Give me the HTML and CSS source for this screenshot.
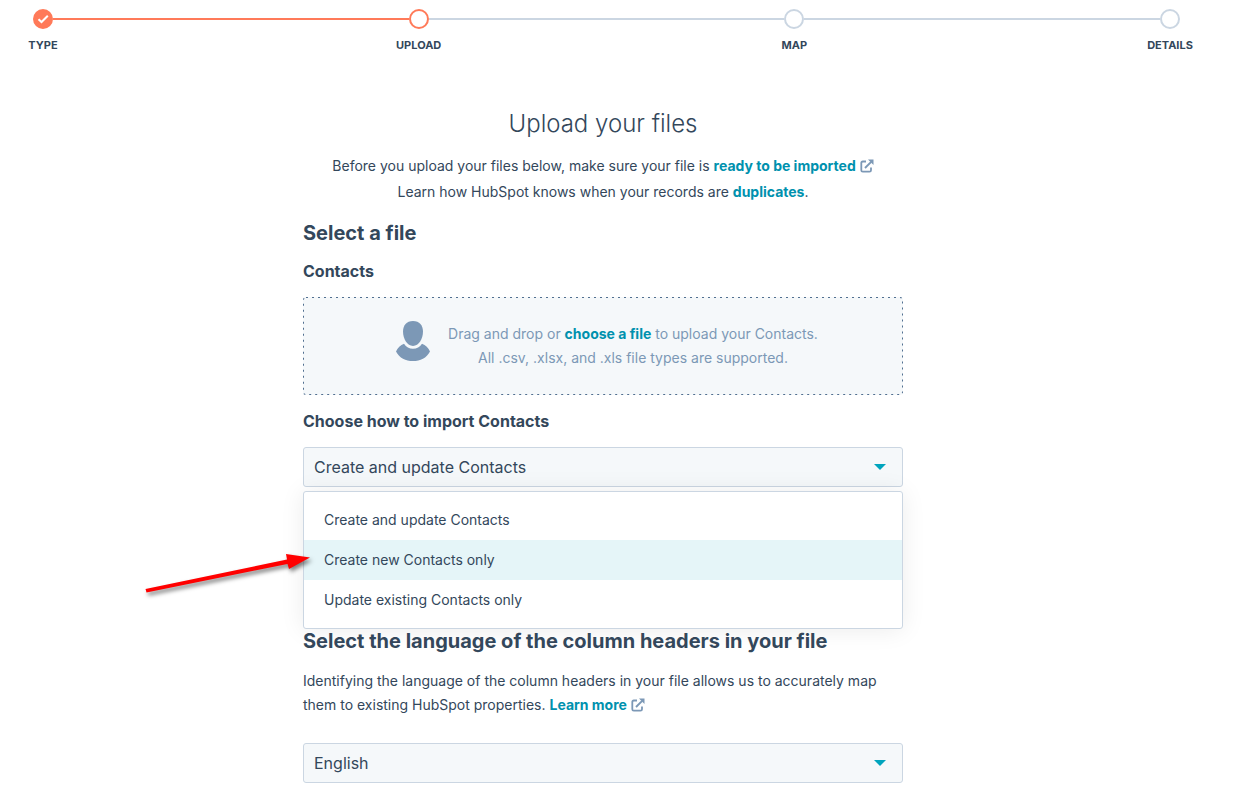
FILE: index.html
```html
<!DOCTYPE html>
<html lang="en">
<head>
<meta charset="utf-8">
<meta name="viewport" content="width=device-width, initial-scale=1">
<title>Upload your files</title>
<link rel="stylesheet" href="styles.css">
</head>
<body>
<svg class="defs" aria-hidden="true">
  <symbol id="external" viewBox="0 0 14 14">
    <path d="M6 2.500H2.800Q1.300 2.500 1.300 4V11.200Q1.300 12.700 2.800 12.700H9.500Q11 12.700 11 11.200V8.500" fill="none" stroke="currentColor" stroke-width="1.800"/>
    <path d="M5 9L11.200 2.800" fill="none" stroke="currentColor" stroke-width="1.900"/>
    <path d="M8 0.500H13.500V6Z" fill="currentColor"/>
  </symbol>
</svg>
<nav aria-label="Import progress">
  <ol class="stepper">
    <li class="step step-done">
      <span class="dot"><svg viewBox="0 0 20 20" aria-hidden="true"><path d="M5.500 10.200L8.500 13L14.800 6.700" fill="none" stroke="#fff" stroke-width="2"/></svg></span>
      <span class="step-label">TYPE</span>
    </li>
    <li class="line line-done" role="presentation"></li>
    <li class="step step-current" aria-current="step">
      <span class="dot"></span>
      <span class="step-label">UPLOAD</span>
    </li>
    <li class="line" role="presentation"></li>
    <li class="step"><span class="dot"></span><span class="step-label">MAP</span></li>
    <li class="line" role="presentation"></li>
    <li class="step"><span class="dot"></span><span class="step-label">DETAILS</span></li>
  </ol>
</nav>
<main class="content">
  <h1>Upload your files</h1>
  <p class="intro">Before you upload your files below, make sure your file is <a href="#">ready to be imported</a> <svg class="external"><use href="#external"/></svg><br>Learn how HubSpot knows when your records are <a href="#">duplicates</a>.</p>

  <h2>Select a file</h2>
  <h3>Contacts</h3>
  <div class="dropzone">
    <svg class="outline" aria-hidden="true"><rect width="100%" height="100%" rx="3"/></svg>
    <svg class="person" viewBox="0 0 34 40" aria-hidden="true">
      <path d="M17 0C23.500 0 27 4.600 27 10.600C27 18 22.800 25 17 25C11.200 25 7 18 7 10.600C7 4.600 10.500 0 17 0Z"/>
      <path d="M8 22.800C10.200 26 13.200 27.800 17 27.800C20.800 27.800 23.800 26 26 22.800C29.500 24.200 32.500 27 34 30.400C30.500 37 24.500 40 17 40C9.500 40 3.500 37 0 30.400C1.500 27 4.500 24.200 8 22.800Z"/>
    </svg>
    <p>Drag and drop or <button type="button" class="link">choose a file</button> to upload your Contacts.<br>All .csv, .xlsx, and .xls file types are supported.</p>
  </div>

  <h3><label for="import-mode">Choose how to import Contacts</label></h3>
  <div class="field field-open">
    <select id="import-mode">
      <option>Create and update Contacts</option>
      <option>Create new Contacts only</option>
      <option>Update existing Contacts only</option>
    </select>
    <div class="menu" role="listbox" aria-label="Import options">
      <button type="button" role="option" aria-selected="false">Create and update Contacts</button>
      <button type="button" role="option" aria-selected="true">Create new Contacts only</button>
      <button type="button" role="option" aria-selected="false">Update existing Contacts only</button>
    </div>
    <svg class="arrow" viewBox="0 0 180 60" aria-hidden="true">
      <path d="M5.500 44L6.500 47.500L147.500 19L149 24L170 12.500L146 9L147 14.500Z"/>
    </svg>
  </div>

  <h2><label for="language">Select the language of the column headers in your file</label></h2>
  <p class="help">Identifying the language of the column headers in your file allows us to accurately map them to existing HubSpot properties. <a href="#">Learn more</a> <svg class="external"><use href="#external"/></svg></p>
  <div class="field">
    <select id="language"><option>English</option></select>
  </div>
</main>
</body>
</html>
```
FILE: styles.css
```css
* { box-sizing: border-box; }

body {
  margin: 0;
  padding: 9px 27px 22px 0;
  background: #fff;
  color: #33475b;
  font: 400 14px/24px Inter, "Open Sans", sans-serif;
}

h1, h2, h3, p { margin: 0; }
button, select { font: inherit; color: inherit; }
.defs { position: absolute; width: 0; height: 0; }

.stepper {
  display: flex;
  margin: 0 26px 0 33px;
  padding: 0;
  list-style: none;
}
.step {
  display: flex;
  flex-direction: column;
  align-items: center;
  gap: 8px;
  width: 20px;
}
.dot {
  display: flex;
  width: 20px;
  height: 20px;
  border: 2px solid #cbd6e2;
  border-radius: 50%;
}
.dot svg { flex: none; width: 20px; height: 20px; margin: -2px; }
.step-done .dot { border-color: #ff7a59; background: #ff7a59; }
.step-current .dot { border-color: #ff7a59; }
.step-label {
  font-size: 11px;
  font-weight: 700;
  line-height: 16px;
  white-space: nowrap;
}
.line {
  flex: 1;
  height: 2px;
  margin-top: 9px;
  background: #cbd6e2;
}
.line-done { background: #ff7a59; }

.content { max-width: 600px; margin: 55px auto 0; }

h1 {
  font-size: 24px;
  font-weight: 300;
  line-height: 32px;
  text-align: center;
}
h2 { font-size: 20px; font-weight: 700; line-height: 28px; margin-top: 14px; }
h3 { font-size: 16px; font-weight: 700; line-height: 24px; margin: 14px 0; }
h2 + h3 { margin-top: 12px; }

a, .link { color: #0091ae; font-weight: 700; text-decoration: none; }
.link { padding: 0; border: 0; background: none; cursor: pointer; }

.intro { margin-top: 13px; line-height: 26px; text-align: center; }
.external { width: 14px; height: 14px; color: #7c98b6; vertical-align: -2px; }

.dropzone {
  position: relative;
  display: flex;
  justify-content: center;
  align-items: center;
  gap: 18px;
  min-height: 98px;
  padding: 0 0 0 8px;
  border-radius: 3px;
  background: #f5f8fa;
  color: #7c98b6;
  text-align: center;
}
.outline {
  position: absolute;
  inset: 0;
  width: 100%;
  height: 100%;
  border-radius: 3px;
  fill: none;
  stroke: #516f90;
  stroke-width: 2;
  stroke-dasharray: 2 4;
  pointer-events: none;
}
.person { flex: none; width: 34px; height: 40px; margin-bottom: 10px; fill: #7c98b6; }

.field { position: relative; }
.field-open { margin-bottom: 140px; }
select {
  display: block;
  width: 100%;
  height: 40px;
  padding: 0 10px;
  border: 1px solid #cbd6e2;
  border-radius: 3px;
  appearance: none;
  background: #f5f8fa;
  font-size: 16px;
}
.field::after {
  content: "";
  position: absolute;
  top: 17px;
  right: 17px;
  border: 6px solid transparent;
  border-top-color: #00a4bd;
  border-bottom: 0;
  pointer-events: none;
}

.menu {
  position: absolute;
  top: 44px;
  left: 0;
  right: 0;
  padding: 8px 0;
  border: 1px solid #cbd6e2;
  border-radius: 3px;
  background: #fff;
  box-shadow: 0 1px 24px rgba(0, 0, 0, 0.08);
}
.menu button {
  display: block;
  width: 100%;
  height: 40px;
  padding: 0 20px;
  border: 0;
  background: none;
  text-align: left;
}
.menu button[aria-selected="true"] { background: #e5f5f8; }

.arrow {
  position: absolute;
  top: 98px;
  left: -163px;
  width: 180px;
  height: 60px;
  fill: #f00;
  filter: drop-shadow(2px 3px 2px rgba(0, 0, 0, 0.5));
  pointer-events: none;
}

.field-open + h2 { position: relative; }
.help { margin: 14px 0 26px; }
```
